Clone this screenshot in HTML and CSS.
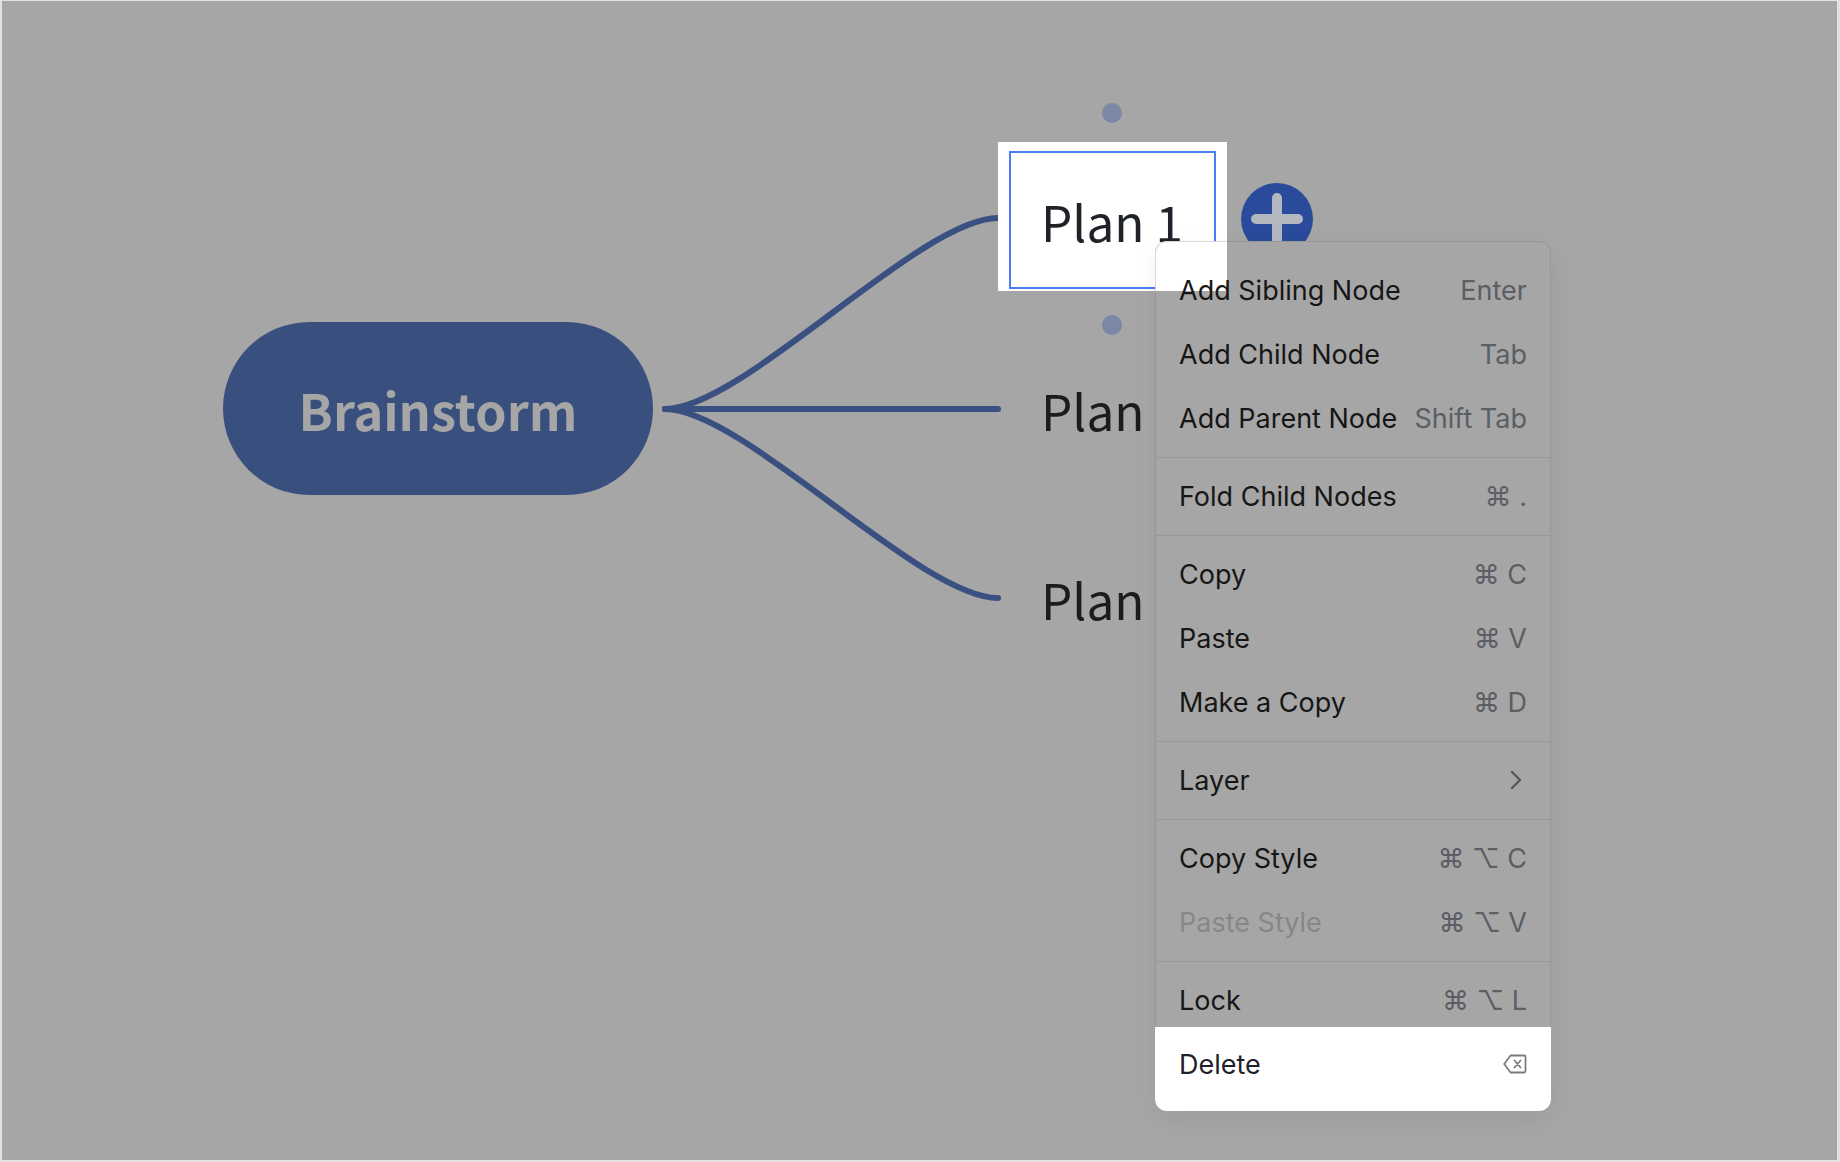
FILE: index.html
```html
<!DOCTYPE html>
<html lang="en">

<head>
    <meta charset="UTF-8">
    <meta name="viewport" content="width=device-width, initial-scale=1.0">
    <title>Brainstorm - Mind Map</title>
    <link rel="stylesheet" href="styles.css">
</head>

<body>
    <div class="canvas">
        <!-- branch lines -->
        <svg class="links" width="1840" height="1162" viewBox="0 0 1840 1162">
            <path d="M665 409 C743 409 920 218 998 218" />
            <path d="M665 409 L998 409" />
            <path d="M665 409 C743 409 920 598 998 598" />
        </svg>

        <div class="root-node">Brainstorm</div>

        <span class="handle handle-top"></span>
        <span class="handle handle-bottom"></span>

        <div class="spotlight">
            <div class="topic topic-selected">Plan 1</div>
        </div>

        <!-- the rest of these labels sits under the menu -->
        <div class="topic topic-2">Plan</div>
        <div class="topic topic-3">Plan</div>

        <div class="add-btn">
            <svg width="72" height="72" viewBox="0 0 72 72">
                <path d="M36 15 V57 M15 36 H57" />
            </svg>
        </div>

        <!-- context menu -->
        <div class="menu">
            <div class="menu-patch"></div>

            <div class="menu-group">
                <div class="menu-item"><span>Add Sibling Node</span><span class="key">Enter</span></div>
                <div class="menu-item"><span>Add Child Node</span><span class="key">Tab</span></div>
                <div class="menu-item"><span>Add Parent Node</span><span class="key">Shift Tab</span></div>
            </div>
            <div class="menu-group">
                <div class="menu-item"><span>Fold Child Nodes</span><span class="key">⌘&nbsp;.</span></div>
            </div>
            <div class="menu-group">
                <div class="menu-item"><span>Copy</span><span class="key">⌘&nbsp;C</span></div>
                <div class="menu-item"><span>Paste</span><span class="key">⌘&nbsp;V</span></div>
                <div class="menu-item"><span>Make a Copy</span><span class="key">⌘&nbsp;D</span></div>
            </div>
            <div class="menu-group">
                <div class="menu-item"><span>Layer</span>
                    <svg class="chevron" width="20" height="20" viewBox="0 0 20 20">
                        <path d="M5 2 L13 10 L5 18" />
                    </svg>
                </div>
            </div>
            <div class="menu-group">
                <div class="menu-item"><span>Copy Style</span><span class="key">⌘&nbsp;⌥&nbsp;C</span></div>
                <div class="menu-item disabled"><span>Paste Style</span><span class="key">⌘&nbsp;⌥&nbsp;V</span></div>
            </div>
            <div class="menu-group last">
                <div class="menu-item"><span>Lock</span><span class="key">⌘&nbsp;⌥&nbsp;L</span></div>
                <div class="menu-item menu-delete"><span>Delete</span>
                    <svg class="erase" width="24" height="20" viewBox="0 0 24 20">
                        <path d="M7.5 1.5 H21 Q22.5 1.5 22.5 3 V17 Q22.5 18.5 21 18.5 H7.5 L1.2 10 Z" />
                        <path d="M11.5 6.5 L17.5 13.5 M17.5 6.5 L11.5 13.5" />
                    </svg>
                </div>
            </div>
        </div>
    </div>
</body>

</html>
```

FILE: styles.css
```css
body {
    margin: 0;
    font-family: "Noto Sans CJK SC", "Noto Sans", sans-serif;
}

.canvas {
    position: relative;
    width: 1840px;
    height: 1162px;
    overflow: hidden;
    background-color: #a6a6a6;
    box-shadow: inset 2px 1px 0 #e2e2e2, inset -3px -2px 0 #e2e2e2;
}

.links {
    position: absolute;
    left: 0;
    top: 0;
}

.links path {
    fill: none;
    stroke: #3a5080;
    stroke-width: 6;
    stroke-linecap: round;
}

.root-node {
    position: absolute;
    left: 223px;
    top: 322px;
    width: 430px;
    height: 173px;
    border-radius: 87px;
    background-color: #39507e;
    color: #a6a6a6;
    font-size: 50.5px;
    font-weight: bold;
    display: flex;
    align-items: center;
    justify-content: center;
}

.handle {
    position: absolute;
    left: 1102px;
    width: 20px;
    height: 20px;
    border-radius: 50%;
    background-color: #7a88a6;
}

.handle-top {
    top: 103px;
}

.handle-bottom {
    top: 315px;
}

.spotlight {
    position: absolute;
    left: 998px;
    top: 142px;
    width: 229px;
    height: 149px;
    padding: 9px 0 0 11px;
    box-sizing: border-box;
    background-color: #fff;
}

.topic {
    font-size: 49.5px;
    color: #1c1c1c;
    display: flex;
    align-items: center;
    white-space: nowrap;
}

.topic-selected {
    width: 207px;
    height: 138px;
    box-sizing: border-box;
    padding-left: 30px;
    border: 2px solid #4b7cf0;
    color: #1f2329;
}

.topic-2,
.topic-3 {
    position: absolute;
    left: 1041px;
    height: 80px;
}

.topic-2 {
    top: 369px;
}

.topic-3 {
    top: 558px;
}

.add-btn {
    position: absolute;
    left: 1241px;
    top: 183px;
    width: 72px;
    height: 72px;
    border-radius: 50%;
    background-color: #2a4a9b;
}

.add-btn path {
    stroke: #b3b7c0;
    stroke-width: 10;
    stroke-linecap: round;
}

/* context menu */
.menu {
    position: absolute;
    left: 1155px;
    top: 241px;
    width: 396px;
    box-sizing: border-box;
    padding-top: 10px;
    border: 1px solid #969696;
    border-radius: 12px;
    background-color: #a6a6a6;
    box-shadow: 0 8px 24px rgba(0, 0, 0, 0.06);
    font-family: Inter, "DejaVu Sans", sans-serif;
    font-size: 27px;
    color: #161616;
}

.menu-patch {
    position: absolute;
    left: -1px;
    top: -1px;
    width: 72px;
    height: 50px;
    box-sizing: border-box;
    border-top: 1px solid #dadada;
    border-left: 1px solid #dadada;
    border-top-left-radius: 12px;
    background-color: #fff;
}

.menu-group {
    position: relative;
    padding: 6px 0 7px;
}

.menu-group + .menu-group {
    border-top: 1px solid #979797;
}

.menu-group.last {
    padding-bottom: 0;
}

.menu-item {
    display: flex;
    align-items: center;
    justify-content: space-between;
    height: 64px;
    padding: 0 23px;
    white-space: nowrap;
}

.key {
    color: #5b5e64;
}

.disabled {
    color: #878787;
}

.chevron path {
    fill: none;
    stroke: #55585d;
    stroke-width: 2.4;
    stroke-linecap: round;
    stroke-linejoin: round;
}

.menu-delete {
    margin: -5px -1px -1px;
    padding: 5px 24px 15px;
    border-radius: 0 0 12px 12px;
    background-color: #fff;
    color: #1f2329;
}

.erase path {
    fill: none;
    stroke: #7a7c82;
    stroke-width: 1.8;
    stroke-linecap: round;
    stroke-linejoin: round;
}
```
